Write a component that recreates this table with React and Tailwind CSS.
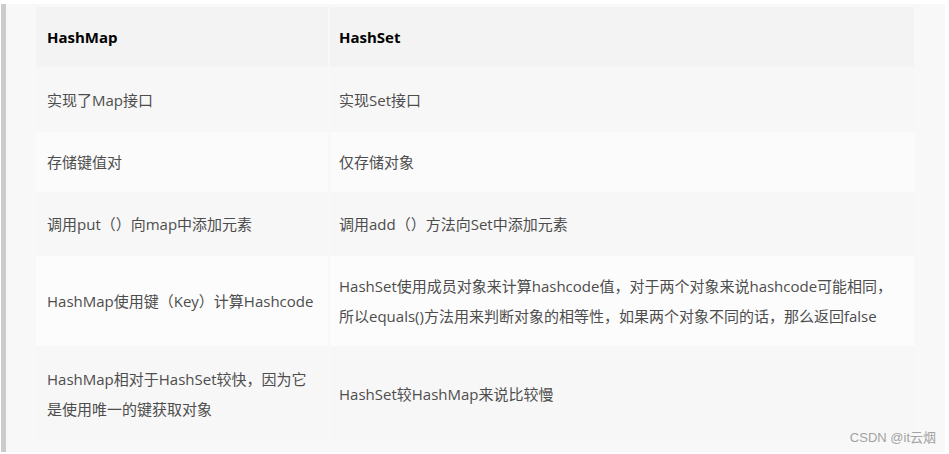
import React from "react";

// 表格数据
const rows = [
  {
    left: ["实现了Map接口"],
    right: ["实现Set接口"],
    h: "h-[65px]",
    bg: "bg-[#f7f7f7]",
  },
  {
    left: ["存储键值对"],
    right: ["仅存储对象"],
    h: "h-[60px]",
    bg: "bg-[#fbfbfb]",
  },
  {
    left: ["调用put（）向map中添加元素"],
    right: ["调用add（）方法向Set中添加元素"],
    h: "h-[64px]",
    bg: "bg-[#f7f7f7]",
  },
  {
    left: ["HashMap使用键（Key）计算Hashcode"],
    right: [
      "HashSet使用成员对象来计算hashcode值，对于两个对象来说hashcode可能相同，",
      "所以equals()方法用来判断对象的相等性，如果两个对象不同的话，那么返回false",
    ],
    h: "h-[90px]",
    bg: "bg-[#fcfcfc]",
  },
  {
    left: ["HashMap相对于HashSet较快，因为它", "是使用唯一的键获取对象"],
    right: ["HashSet较HashMap来说比较慢"],
    h: "h-[95px]",
    bg: "bg-[#f7f7f7]",
  },
];

function Cell({ lines, className }) {
  return (
    <div className={`flex items-center px-[11px] ${className}`}>
      <div className="whitespace-nowrap leading-[30px]">
        {lines.map((line, i) => (
          <div key={i}>{line}</div>
        ))}
      </div>
    </div>
  );
}

function App() {
  return (
    <div className="w-[949px] h-[454px] bg-white pt-[4px] pb-[2px] pr-[4px] pl-[1px]">
      <div
        className="relative h-full bg-[#f8f8f8] border-l-[5px] border-[#cccccc] pl-[30px] pr-[30px] pt-[3px] text-[15px] text-[#4d4d4d]"
        style={{ fontFamily: '"Open Sans", "Noto Sans CJK SC", sans-serif' }}
      >
        <div className="grid grid-cols-[292px_584px] gap-x-[2px]">
          {/* 表头 */}
          <Cell
            lines={["HashMap"]}
            className="h-[60px] bg-[#f3f3f3] font-bold text-black"
          />
          <Cell
            lines={["HashSet"]}
            className="h-[60px] bg-[#f3f3f3] font-bold text-black !px-[9px]"
          />

          {/* 내용 행 */}
          {rows.map((row, i) => (
            <React.Fragment key={i}>
              <Cell lines={row.left} className={`${row.h} ${row.bg}`} />
              <Cell lines={row.right} className={`${row.h} ${row.bg} !px-[9px]`} />
            </React.Fragment>
          ))}
        </div>

        {/* 워터마크 */}
        <div
          className="absolute right-[9px] bottom-[5px] text-[13px] text-[#a3a3a3]"
          style={{ fontFamily: '"Liberation Sans", "Noto Sans CJK SC", sans-serif' }}
        >
          CSDN @it云烟
        </div>
      </div>
    </div>
  );
}

export default App;
